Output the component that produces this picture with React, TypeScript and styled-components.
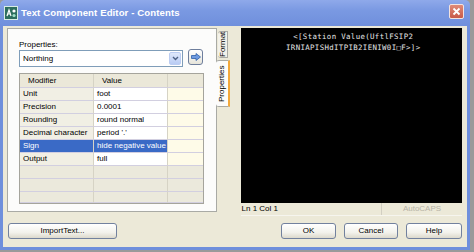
import React from 'react';
import styled, { createGlobalStyle } from 'styled-components';

const GlobalStyle = createGlobalStyle`
  html, body {
    margin: 0;
    padding: 0;
    background: #9a9a9a;
  }
  body {
    width: 474px;
    height: 252px;
    overflow: hidden;
    font-family: 'Liberation Sans', Arial, sans-serif;
  }
`;

const Window = styled.div`
  width: 470px;
  height: 250px;
  display: flex;
  flex-direction: column;
`;

const TitleBar = styled.div`
  height: 26px;
  flex: none;
  display: flex;
  align-items: center;
  padding: 0 4px 0 4px;
  box-sizing: border-box;
  background: linear-gradient(to bottom, #8fa9ea 0%, #7a99e2 40%, #6f8fdc 100%);
  border-radius: 5px 5px 0 0;
`;

const TitleText = styled.span`
  flex: 1;
  margin-left: 3px;
  margin-top: -2px;
  color: #ffffff;
  font-weight: bold;
  font-size: 9.6px;
  letter-spacing: 0.1px;
`;

const CloseButton = styled.div`
  width: 13px;
  height: 13px;
  margin: -4px 2px 0 0;
  border: 1px solid #f3e3e0;
  border-radius: 2px;
  background: linear-gradient(to bottom, #e08a78, #c85a48);
  display: flex;
  align-items: center;
  justify-content: center;
`;

const Body = styled.div`
  flex: 1;
  display: flex;
  flex-direction: column;
  background: #ece9d8;
  border: 3px solid #6f8fdc;
  border-top: none;
  padding: 2px 5px 0 4px;
`;

const Main = styled.div`
  height: 188px;
  display: flex;
  flex: none;
`;

const LeftPanel = styled.div`
  width: 210px;
  height: 184px;
  box-sizing: border-box;
  border: 1px solid #a9aaa5;
  background: #fcfcfb;
  padding: 10px 0 0 11px;
  display: flex;
  flex-direction: column;
`;

const Label = styled.div`
  font-size: 8px;
  color: #000;
  height: 11px;
  line-height: 11px;
`;

const ComboRow = styled.div`
  display: flex;
  align-items: flex-start;
  height: 23px;
`;

const Combo = styled.div`
  width: 164px;
  height: 17px;
  box-sizing: border-box;
  border: 1px solid #7f9db9;
  background: #fff;
  display: flex;
  align-items: center;
  padding-left: 3px;
  font-size: 8px;
`;

const ComboText = styled.span`
  flex: 1;
`;

const ComboButton = styled.div`
  width: 12px;
  height: 13px;
  margin-right: 1px;
  border-radius: 2px;
  background: linear-gradient(to bottom, #dfe8fb, #b9ccf4);
  border: 1px solid #bccdf2;
  box-sizing: border-box;
  display: flex;
  align-items: center;
  justify-content: center;
`;

const PickButton = styled.div`
  width: 15px;
  height: 16px;
  margin: -1px 0 0 5px;
  box-sizing: border-box;
  border: 1px solid #6e7e9c;
  border-radius: 3px;
  background: linear-gradient(to bottom, #ffffff, #e6e4da);
  display: flex;
  align-items: center;
  justify-content: center;
`;

const Table = styled.div`
  width: 185px;
  box-sizing: border-box;
  border: 1px solid #a5a49c;
  display: grid;
  grid-template-columns: 74px 74px 1fr;
  grid-template-rows: 14px repeat(8, 13px) 11px;
  background: #ebe9dc;
`;

const Cell = styled.div<{ $kind: 'head' | 'name' | 'value' | 'extra' | 'empty'; $selected?: boolean }>`
  box-sizing: border-box;
  border-right: 1px solid #d6d3c5;
  border-bottom: 1px solid #d2cfe0;
  font-size: 8px;
  line-height: 12px;
  padding-left: 3px;
  white-space: nowrap;
  overflow: hidden;
  color: ${(p) => (p.$selected ? '#ffffff' : '#000000')};
  background: ${(p) => {
    if (p.$selected) return '#3a6ac6';
    switch (p.$kind) {
      case 'head':
        return '#ebe8d9';
      case 'name':
        return '#f1efe4';
      case 'value':
        return '#ffffff';
      case 'extra':
        return '#fefbe8';
      default:
        return '#ebe9dc';
    }
  }};
  ${(p) => p.$kind === 'head' && 'padding-left: 8px; line-height: 13px;'}
  &:nth-child(3n) {
    border-right: none;
  }
`;

const TabStrip = styled.div`
  width: 15px;
  padding-top: 3px;
  display: flex;
  flex-direction: column;
  align-items: flex-start;
  margin-right: 9px;
`;

const Tab = styled.div<{ $active?: boolean }>`
  writing-mode: vertical-rl;
  transform: rotate(180deg);
  font-size: 8px;
  box-sizing: border-box;
  text-align: center;
  background: ${(p) => (p.$active ? '#fcfcfb' : '#f3f2ea')};
  border: 1px solid #a9aaa5;
  border-left: ${(p) => (p.$active ? '2px solid #f3a93c' : '1px solid #a9aaa5')};
  border-right: none;
  width: ${(p) => (p.$active ? '14px' : '10px')};
  height: ${(p) => (p.$active ? '47px' : '27px')};
  margin-left: ${(p) => (p.$active ? '-1px' : '1px')};
  margin-top: ${(p) => (p.$active ? '2px' : '0')};
  line-height: ${(p) => (p.$active ? '12px' : '9px')};
  border-radius: 0 3px 3px 0;
`;

const Editor = styled.div`
  width: 222px;
  display: flex;
  flex-direction: column;
`;

const EditorScreen = styled.div`
  height: 175px;
  background: #000;
  color: #e6e6e6;
  font-family: 'DejaVu Sans Mono', monospace;
  font-size: 7.4px;
  letter-spacing: 0.35px;
  line-height: 11px;
  text-align: center;
  padding-top: 3px;
  box-sizing: border-box;
  padding-left: 4px;
`;

const StatusBar = styled.div`
  height: 13px;
  display: flex;
  font-size: 8px;
  line-height: 12px;
  border-bottom: 1px solid #f6f5ef;
  box-sizing: border-box;
`;

const StatusCell = styled.div<{ $muted?: boolean }>`
  flex: ${(p) => (p.$muted ? 'none' : '1')};
  width: ${(p) => (p.$muted ? '80px' : 'auto')};
  color: ${(p) => (p.$muted ? '#b6b3a6' : '#000')};
  text-align: ${(p) => (p.$muted ? 'center' : 'left')};
  border-left: ${(p) => (p.$muted ? '1px solid #d2cfc2' : 'none')};
  padding-left: ${(p) => (p.$muted ? '0' : '1px')};
`;

const Footer = styled.div`
  display: flex;
  margin-top: 7px;
  padding-left: 1px;
`;

const Button = styled.div<{ $width: number }>`
  width: ${(p) => p.$width}px;
  height: 16px;
  box-sizing: border-box;
  border: 1px solid #72819e;
  border-radius: 3px;
  background: linear-gradient(to bottom, #ffffff 0%, #f3f2ec 60%, #dcd9cc 100%);
  font-size: 8px;
  line-height: 14px;
  text-align: center;
  color: #000;
`;

const Spacer = styled.div`
  flex: 1;
`;

const ButtonGroup = styled.div`
  display: flex;
  gap: 8px;
`;

const AppIcon = () => (
  <svg width="14" height="14" viewBox="0 0 14 14">
    <rect x="0.5" y="0.5" width="13" height="13" fill="#2d6e5e" stroke="#d8ece4" />
    <path d="M3 10 L5 4 L7 10 M3.8 8 H6.2" stroke="#ffffff" strokeWidth="1.2" fill="none" />
    <circle cx="10" cy="5" r="1.6" fill="#ffffff" />
    <circle cx="10" cy="9.5" r="1.6" fill="#9fe0c8" />
  </svg>
);

const CloseIcon = () => (
  <svg width="9" height="9" viewBox="0 0 9 9">
    <path d="M1.5 1.5 L7.5 7.5 M7.5 1.5 L1.5 7.5" stroke="#ffffff" strokeWidth="1.8" />
  </svg>
);

const Chevron = () => (
  <svg width="7" height="5" viewBox="0 0 7 5">
    <path d="M1 1 L3.5 3.5 L6 1" stroke="#4d6185" strokeWidth="1.4" fill="none" />
  </svg>
);

const RightArrow = () => (
  <svg width="10" height="8" viewBox="0 0 10 8">
    <path d="M0.5 2.5 H5 V0.5 L9.5 4 L5 7.5 V5.5 H0.5 Z" fill="#6f9be0" stroke="#2f5fa8" strokeWidth="0.8" />
  </svg>
);

const rows: [string, string][] = [
  ['Unit', 'foot'],
  ['Precision', '0.0001'],
  ['Rounding', 'round normal'],
  ['Decimal character', "period '.'"],
  ['Sign', 'hide negative value'],
  ['Output', 'full'],
];

const App: React.FC = () => {
  return (
    <>
      <GlobalStyle />
      <Window>
        <TitleBar>
          <AppIcon />
          <TitleText>Text Component Editor - Contents</TitleText>
          <CloseButton>
            <CloseIcon />
          </CloseButton>
        </TitleBar>
        <Body>
          <Main>
            <LeftPanel>
              <Label>Properties:</Label>
              <ComboRow>
                <Combo>
                  <ComboText>Northing</ComboText>
                  <ComboButton>
                    <Chevron />
                  </ComboButton>
                </Combo>
                <PickButton>
                  <RightArrow />
                </PickButton>
              </ComboRow>
              <Table>
                <Cell $kind="head">Modifier</Cell>
                <Cell $kind="head">Value</Cell>
                <Cell $kind="head" />
                {rows.map(([name, value]) => {
                  const selected = name === 'Sign';
                  return (
                    <React.Fragment key={name}>
                      <Cell $kind="name" $selected={selected}>
                        {name}
                      </Cell>
                      <Cell $kind="value" $selected={selected}>
                        {value}
                      </Cell>
                      <Cell $kind="extra" />
                    </React.Fragment>
                  );
                })}
                {[0, 1, 2].map((i) => (
                  <React.Fragment key={i}>
                    <Cell $kind="empty" />
                    <Cell $kind="empty" />
                    <Cell $kind="empty" />
                  </React.Fragment>
                ))}
              </Table>
            </LeftPanel>
            <TabStrip>
              <Tab>Format</Tab>
              <Tab $active>Properties</Tab>
            </TabStrip>
            <Editor>
              <EditorScreen>
                &lt;[Station Value(UftlFSIP2
                <br />
                IRNIAPISHdITPIB2IENIW0I□F&gt;]&gt;
              </EditorScreen>
              <StatusBar>
                <StatusCell>Ln 1 Col 1</StatusCell>
                <StatusCell $muted>AutoCAPS</StatusCell>
              </StatusBar>
            </Editor>
          </Main>
          <Footer>
            <Button $width={109}>ImportText...</Button>
            <Spacer />
            <ButtonGroup>
              <Button $width={55}>OK</Button>
              <Button $width={54}>Cancel</Button>
              <Button $width={56}>Help</Button>
            </ButtonGroup>
          </Footer>
        </Body>
      </Window>
    </>
  );
};

export default App;
